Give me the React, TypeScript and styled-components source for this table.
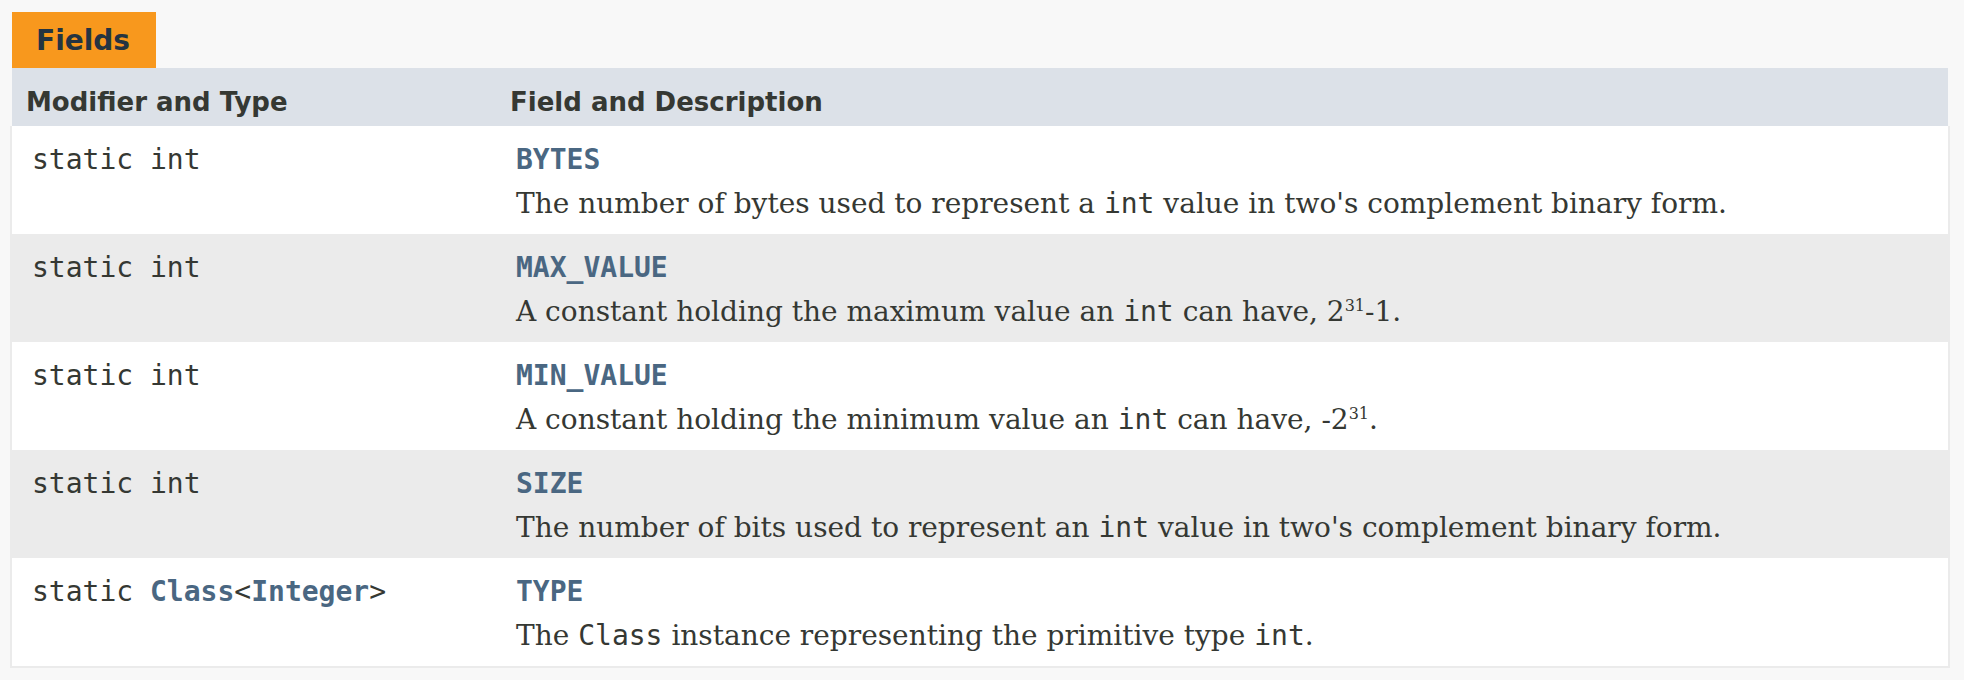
import type { ReactNode } from 'react';
import styled, { createGlobalStyle } from 'styled-components';

const GlobalStyle = createGlobalStyle`
  body {
    margin: 0;
    background: #f8f8f8;
    color: #353833;
    font-family: 'DejaVu Sans', Arial, sans-serif;
  }
`;

const Page = styled.div`
  padding: 12px 14px 0 10px;
`;

const Caption = styled.div`
  display: inline-block;
  margin-left: 2px;
  padding: 11px 26px 9px 24px;
  background: #f8981d;
  color: #253441;
  font-family: 'DejaVu Sans', sans-serif;
  font-weight: bold;
  font-size: 28px;
  line-height: 36px;
`;

const HeaderRow = styled.div`
  display: grid;
  grid-template-columns: 484px 1fr;
  margin: 0 2px;
  background: #dce1e8;
`;

const HeaderCell = styled.div`
  padding: 16px 0 6px 14px;
  font-family: 'DejaVu Sans', sans-serif;
  font-weight: bold;
  font-size: 26px;
  line-height: 36px;
  color: #353833;
`;

const Body = styled.div`
  border: 2px solid #ebebeb;
  border-top: none;
`;

const Row = styled.div<{ $alt: boolean }>`
  display: grid;
  grid-template-columns: 484px 1fr;
  background: ${(p) => (p.$alt ? '#ebebeb' : '#ffffff')};
`;

const TypeCell = styled.div`
  padding: 16px 0 12px 20px;
  font-family: 'DejaVu Sans Mono', monospace;
  font-size: 28px;
  line-height: 36px;
  white-space: nowrap;
`;

const TypeLink = styled.span`
  font-weight: bold;
  color: #4a6782;
`;

const DescCell = styled.div`
  display: flex;
  flex-direction: column;
  padding: 16px 0 12px 20px;
`;

const FieldLink = styled.span`
  font-family: 'DejaVu Sans Mono', monospace;
  font-weight: bold;
  font-size: 28px;
  line-height: 36px;
  color: #4a6782;
`;

const Block = styled.div`
  margin-top: 8px;
  font-family: 'DejaVu Serif', Georgia, serif;
  font-size: 28px;
  line-height: 36px;
  color: #353833;

  code {
    font-family: 'DejaVu Sans Mono', monospace;
    font-size: 28px;
  }

  sup {
    font-size: 16px;
    line-height: 0;
  }
`;

type Field = {
  name: string;
  type: ReactNode;
  desc: ReactNode;
};

const FIELDS: Field[] = [
  {
    name: 'BYTES',
    type: 'static int',
    desc: (
      <>
        The number of bytes used to represent a <code>int</code> value in two's complement binary form.
      </>
    ),
  },
  {
    name: 'MAX_VALUE',
    type: 'static int',
    desc: (
      <>
        A constant holding the maximum value an <code>int</code> can have, 2<sup>31</sup>-1.
      </>
    ),
  },
  {
    name: 'MIN_VALUE',
    type: 'static int',
    desc: (
      <>
        A constant holding the minimum value an <code>int</code> can have, -2<sup>31</sup>.
      </>
    ),
  },
  {
    name: 'SIZE',
    type: 'static int',
    desc: (
      <>
        The number of bits used to represent an <code>int</code> value in two's complement binary form.
      </>
    ),
  },
  {
    name: 'TYPE',
    type: (
      <>
        static <TypeLink>Class</TypeLink>&lt;<TypeLink>Integer</TypeLink>&gt;
      </>
    ),
    desc: (
      <>
        The <code>Class</code> instance representing the primitive type <code>int</code>.
      </>
    ),
  },
];

const App = () => {
  return (
    <Page>
      <GlobalStyle />
      <Caption>Fields</Caption>
      <HeaderRow>
        <HeaderCell>Modifier and Type</HeaderCell>
        <HeaderCell>Field and Description</HeaderCell>
      </HeaderRow>
      <Body>
        {FIELDS.map((f, i) => (
          <Row key={f.name} $alt={i % 2 === 1}>
            <TypeCell>{f.type}</TypeCell>
            <DescCell>
              <FieldLink>{f.name}</FieldLink>
              <Block>{f.desc}</Block>
            </DescCell>
          </Row>
        ))}
      </Body>
    </Page>
  );
};

export default App;
